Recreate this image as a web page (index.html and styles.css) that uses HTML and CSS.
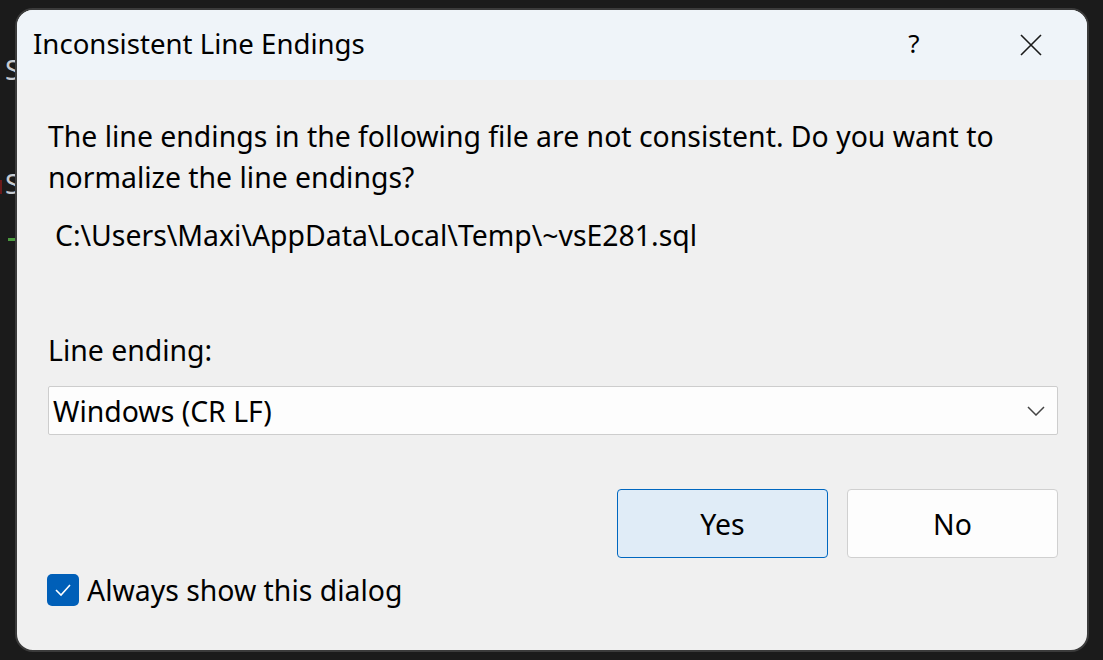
FILE: index.html
```html
<!DOCTYPE html>
<html>
<head>
<meta charset="utf-8">
<link rel="stylesheet" href="styles.css">
</head>
<body>
<div class="backdrop">
  <span class="bg-s s1">S</span>
  <span class="bg-s s2">S</span>
  <span class="bg-red"></span>
  <span class="bg-dash"></span>
</div>
<div class="dialog">
  <div class="titlebar">
    <div class="title">Inconsistent Line Endings</div>
    <div class="help">?</div>
    <div class="close">
      <svg width="22" height="22" viewBox="0 0 22 22"><path d="M1 1L21 21M21 1L1 21" stroke="#1a1a1a" stroke-width="1.6" fill="none"/></svg>
    </div>
  </div>
  <div class="content">
    <p class="message">The line endings in the following file are not consistent. Do you want to normalize the line endings?</p>
    <p class="path">C:\Users\Maxi\AppData\Local\Temp\~vsE281.sql</p>
    <label class="field-label">Line ending:</label>
    <div class="select">
      <span>Windows (CR LF)</span>
      <svg width="18" height="10" viewBox="0 0 18 10"><path d="M1 1L9 9L17 1" stroke="#444" stroke-width="1.5" fill="none"/></svg>
    </div>
    <div class="buttons">
      <button class="btn primary">Yes</button>
      <button class="btn">No</button>
    </div>
    <div class="check-row">
      <span class="checkbox">
        <svg width="18" height="14" viewBox="0 0 18 14"><path d="M2 7L7 12L16 2" stroke="#fff" stroke-width="1.6" fill="none"/></svg>
      </span>
      <span class="check-label">Always show this dialog</span>
    </div>
  </div>
</div>
</body>
</html>
```
FILE: styles.css
```css
html, body {
  margin: 0;
  padding: 0;
}
body {
  width: 1103px;
  height: 660px;
  background: #1b1b1b;
  overflow: hidden;
  position: relative;
  font-family: "Noto Sans", "Open Sans", sans-serif;
  color: #000;
}
.backdrop {
  position: absolute;
  left: 0;
  top: 0;
  width: 30px;
  height: 660px;
}
.bg-s {
  position: absolute;
  left: 5px;
  font-size: 28px;
  color: #c6cbd2;
}
.s1 { top: 50px; }
.s2 { top: 164px; }
.bg-red {
  position: absolute;
  left: 0;
  top: 180px;
  width: 2px;
  height: 14px;
  background: #6a1a1a;
}
.bg-dash {
  position: absolute;
  left: 8px;
  top: 238px;
  width: 10px;
  height: 3px;
  background: #4c9a40;
}
.dialog {
  position: relative;
  margin: 8px 0 0 15px;
  width: 1070px;
  height: 640px;
  border: 2px solid #3b3b3b;
  border-radius: 18px;
  background: #f0f0f0;
  overflow: hidden;
  display: flex;
  flex-direction: column;
}
.titlebar {
  height: 70px;
  background: #eff4f9;
  display: flex;
  align-items: center;
}
.title {
  flex: 1;
  padding-left: 16px;
  font-size: 27.6px;
  padding-bottom: 4px;
}
.help {
  width: 40px;
  text-align: center;
  font-size: 26px;
  margin-right: 86px;
  padding-bottom: 4px;
}
.close {
  width: 22px;
  height: 22px;
  margin-right: 45px;
  display: flex;
}
.content {
  padding: 0 29px 0 31px;
  display: flex;
  flex-direction: column;
  font-size: 28.4px;
}
.message {
  margin: 36px 0 0;
  line-height: 41px;
}
.path {
  margin: 20px 0 0 7px;
  line-height: 34px;
}
.field-label {
  margin-top: 81px;
  line-height: 34px;
}
.select {
  margin-top: 19px;
  height: 47px;
  background: #fdfdfd;
  border: 1px solid #cdcdcd;
  border-radius: 2px;
  display: flex;
  align-items: center;
  justify-content: space-between;
  padding: 0 12px 0 4px;
}
.buttons {
  margin-top: 54px;
  display: flex;
  justify-content: flex-end;
  gap: 19px;
}
.btn {
  width: 211px;
  height: 69px;
  border: 1px solid #d0d0d0;
  border-radius: 4px;
  background: #fdfdfd;
  font-family: inherit;
  font-size: 28.4px;
  color: #000;
  padding: 0;
}
.btn.primary {
  background: #e0ecf7;
  border-color: #0067c0;
}
.check-row {
  margin-top: 13px;
  display: flex;
  align-items: center;
  gap: 8px;
  margin-left: -1px;
}
.checkbox {
  width: 32px;
  height: 32px;
  border-radius: 5px;
  background: #005fb8;
  display: flex;
  align-items: center;
  justify-content: center;
}
```
